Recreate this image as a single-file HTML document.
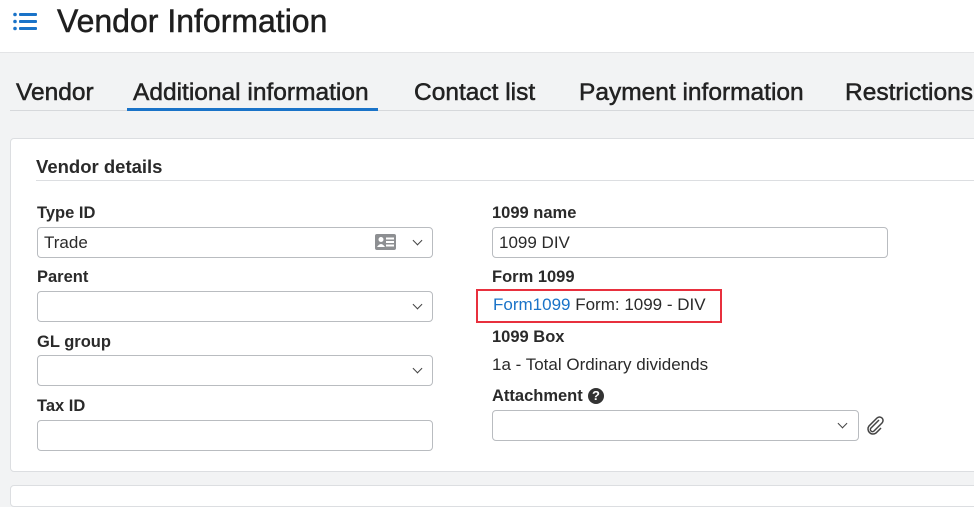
<!DOCTYPE html>
<html><head><style>
body{margin:0;width:974px;height:495px;overflow:hidden;background:#f2f3f4;font-family:"Liberation Sans",sans-serif;color:#222;position:relative}
.a{position:absolute}
.hdr{left:0;top:0;width:974px;height:52px;background:#fff;border-bottom:1px solid #e3e4e6}
.tab{font-size:24.5px;top:79px;color:#222;-webkit-text-stroke:0.5px #222}
.lbl{font-size:16.5px;font-weight:bold;color:#2a2a2a}
.inp{background:#fff;border:1px solid #b9bcc0;border-radius:4px;height:29px;box-sizing:content-box}
.txt{font-size:17px;color:#2a2a2a}
.chev{width:6px;height:6px;border-right:1.5px solid #444;border-bottom:1.5px solid #444;transform:rotate(45deg)}
</style></head><body>
<div class="a hdr"></div>
<svg class="a" style="left:13px;top:12px" width="25" height="20"><g fill="#1a73c8"><circle cx="2" cy="2.5" r="1.8"/><circle cx="2" cy="9.5" r="1.8"/><circle cx="2" cy="16.5" r="1.8"/><rect x="6" y="1" width="18" height="3" rx="1"/><rect x="6" y="8" width="18" height="3" rx="1"/><rect x="6" y="15" width="18" height="3" rx="1"/></g></svg>
<div class="a" style="left:57px;top:3px;font-size:32px;color:#1f1f1f;-webkit-text-stroke:0.5px #1f1f1f">Vendor Information</div>
<div class="a tab" style="left:16px">Vendor</div>
<div class="a tab" style="left:133px">Additional information</div>
<div class="a tab" style="left:414px">Contact list</div>
<div class="a tab" style="left:579px">Payment information</div>
<div class="a tab" style="left:845px">Restrictions</div>
<div class="a" style="left:10px;top:110px;width:964px;height:1px;background:#d6d8db"></div>
<div class="a" style="left:127px;top:108px;width:251px;height:3px;background:#1a73c8"></div>
<div class="a" style="left:10px;top:138px;width:966px;height:332px;background:#fff;border:1px solid #dcdee1;border-radius:4px"></div>
<div class="a" style="left:10px;top:485px;width:966px;height:20px;background:#fff;border:1px solid #dcdee1;border-radius:4px"></div>
<div class="a" style="left:36px;top:156px;font-size:18.5px;font-weight:bold;color:#2a2a2a">Vendor details</div>
<div class="a" style="left:36px;top:180px;width:940px;height:1px;background:#dcdee1"></div>

<div class="a lbl" style="left:37px;top:204px">Type ID</div>
<div class="a inp" style="left:37px;top:227px;width:394px"></div>
<div class="a txt" style="left:44px;top:233px">Trade</div>
<svg class="a" style="left:375px;top:234px" width="21" height="16"><rect width="21" height="16" rx="2" fill="#8d8f92"/><circle cx="6" cy="5.5" r="2.5" fill="#fff"/><path d="M2 13 q4-6 8 0z" fill="#fff"/><rect x="11" y="3.5" width="8" height="2" fill="#fff"/><rect x="11" y="7" width="8" height="2" fill="#fff"/><rect x="11" y="10.5" width="8" height="2" fill="#fff"/></svg>
<div class="a chev" style="left:414px;top:237px"></div>

<div class="a lbl" style="left:37px;top:268px">Parent</div>
<div class="a inp" style="left:37px;top:291px;width:394px"></div>
<div class="a chev" style="left:414px;top:301px"></div>

<div class="a lbl" style="left:37px;top:333px">GL group</div>
<div class="a inp" style="left:37px;top:355px;width:394px"></div>
<div class="a chev" style="left:414px;top:365px"></div>

<div class="a lbl" style="left:37px;top:397px">Tax ID</div>
<div class="a inp" style="left:37px;top:420px;width:394px"></div>

<div class="a lbl" style="left:492px;top:204px">1099 name</div>
<div class="a inp" style="left:492px;top:227px;width:394px"></div>
<div class="a txt" style="left:499px;top:233px">1099 DIV</div>

<div class="a lbl" style="left:492px;top:268px">Form 1099</div>
<div class="a" style="left:476px;top:289px;width:242px;height:30px;border:2px solid #e8303e"></div>
<div class="a txt" style="left:493px;top:295px"><span style="color:#1a73c8">Form1099</span> Form: 1099 - DIV</div>

<div class="a lbl" style="left:492px;top:328px">1099 Box</div>
<div class="a txt" style="left:492px;top:355px">1a - Total Ordinary dividends</div>

<div class="a lbl" style="left:492px;top:387px">Attachment</div>
<div class="a" style="left:588px;top:388px;width:16px;height:16px;border-radius:50%;background:#333;color:#fff;font-size:13px;font-weight:bold;text-align:center;line-height:16px">?</div>
<div class="a inp" style="left:492px;top:410px;width:365px"></div>
<div class="a chev" style="left:839px;top:420px"></div>
<svg class="a" style="left:865px;top:415px" width="20" height="20"><path d="M14 5 L6 13 a2 2 0 0 0 3 3 L17 8 a3.5 3.5 0 0 0 -5 -5 L4 11 a5 5 0 0 0 7 7 L16 13" fill="none" stroke="#444" stroke-width="1.5"/></svg>
</body></html>
